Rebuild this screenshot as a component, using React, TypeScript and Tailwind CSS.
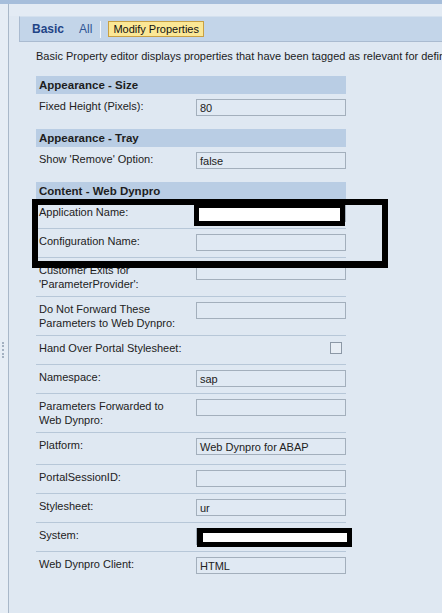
import React from 'react';

type Row = {
  label: string;
  value?: string;
  kind?: 'input' | 'check';
  pad?: string;
};

type Section = {
  title: string;
  rows: Row[];
};

const sections: Section[] = [
  { title: 'Appearance - Size', rows: [{ label: 'Fixed Height (Pixels):', value: '80' }] },
  { title: 'Appearance - Tray', rows: [{ label: "Show 'Remove' Option:", value: 'false' }] },
  {
    title: 'Content - Web Dynpro',
    rows: [
      { label: 'Application Name:', value: '' },
      { label: 'Configuration Name:', value: '' },
      { label: "Customer Exits for 'ParameterProvider':", value: '' },
      { label: 'Do Not Forward These Parameters to Web Dynpro:', value: '' },
      { label: 'Hand Over Portal Stylesheet:', kind: 'check' },
      { label: 'Namespace:', value: 'sap' },
      { label: 'Parameters Forwarded to Web Dynpro:', value: '' },
      { label: 'Platform:', value: 'Web Dynpro for ABAP', pad: 'pt-[5px] pb-[8px]' },
      { label: 'PortalSessionID:', value: '' },
      { label: 'Stylesheet:', value: 'ur' },
      { label: 'System:', value: '' },
      { label: 'Web Dynpro Client:', value: 'HTML' },
    ],
  },
];

function PropertyRow({ row, first }: { row: Row; first: boolean }) {
  return (
    <div className={`flex items-start ${row.pad ?? 'pt-[5px] pb-[5px]'} ${first ? '' : 'border-t border-[#b7c7d8]'}`}>
      <div className="w-[160px] min-h-[18px] pl-[3px] pr-[10px] text-[11px] leading-[14px] text-[#222]">
        {row.label}
      </div>
      {row.kind === 'check' ? (
        <div className="flex w-[150px] justify-end pr-[4px] pt-[1px]">
          <div className="h-[12px] w-[12px] border border-[#8c98a6] bg-[#e8eef5]" />
        </div>
      ) : (
        <div className="h-[17px] w-[150px] border border-[#a3afbc] bg-[#e0e9f3] pl-[3px] text-[11px] leading-[16px] text-[#222]">
          {row.value}
        </div>
      )}
    </div>
  );
}

export default function App() {
  return (
    <div className="relative h-[613px] w-[442px] overflow-hidden bg-[#dfe8f2] font-['Liberation_Sans',Arial,sans-serif]">
      {/* top frame strip */}
      <div className="h-[4px] bg-[#a6bedb]" />

      <div className="flex h-[609px]">
        {/* left splitter */}
        <div className="relative w-[9px] shrink-0 border-r border-[#a9b8c9] bg-[#e6edf5]">
          <div className="absolute left-[2px] top-[338px] h-[16px] w-[2px] border-l-2 border-dotted border-[#a3b1c1]" />
        </div>

        <div className="min-w-0 flex-1 overflow-hidden bg-[#dfe8f2]">
          <div className="h-[12px] bg-[#e3ebf4]" />

          {/* tab strip */}
          <div className="ml-[10px] flex h-[26px] items-center border-b border-l border-t border-[#aabbd0] border-t-[#d3e0ee] bg-[#c3d5e9] pl-[12px]">
            <span className="text-[12px] font-bold text-[#1f4486]">Basic</span>
            <span className="ml-[15px] text-[12px] text-[#2f5595]">All</span>
            <span className="ml-[8px] h-[17px] w-[1px] bg-[#f4f7fb]" />
            <button className="ml-[7px] h-[16px] border border-[#c9a043] bg-[#fbe795] px-[4px] text-[11px] leading-[14px] text-[#111]">
              Modify Properties
            </button>
          </div>

          <p className="ml-[27px] mt-[7px] whitespace-nowrap text-[11px] leading-[14px] text-[#1c1c1c]">
            Basic Property editor displays properties that have been tagged as relevant for definition
          </p>

          <div className="ml-[27px] mt-[13px] w-[310px]">
            {sections.map((s) => (
              <div key={s.title} className="mb-[7px]">
                <div className="h-[18px] bg-[#b9cde4] pl-[3px] text-[11.5px] font-bold leading-[18px] text-[#1d1d1d]">
                  {s.title}
                </div>
                {s.rows.map((r, i) => (
                  <PropertyRow key={r.label} row={r} first={i === 0} />
                ))}
              </div>
            ))}
          </div>
        </div>
      </div>

      {/* redaction overlays drawn on the screenshot */}
      <div className="absolute left-[32px] top-[199px] h-[69px] w-[356px] border-[6px] border-b-[7px] border-black" />
      <div className="absolute left-[194px] top-[203px] h-[23px] w-[151px] border-[5px] border-black bg-white" />
      <div className="absolute left-[197px] top-[528px] h-[19px] w-[155px] border-[5px] border-l-[6px] border-black bg-white" />
    </div>
  );
}
